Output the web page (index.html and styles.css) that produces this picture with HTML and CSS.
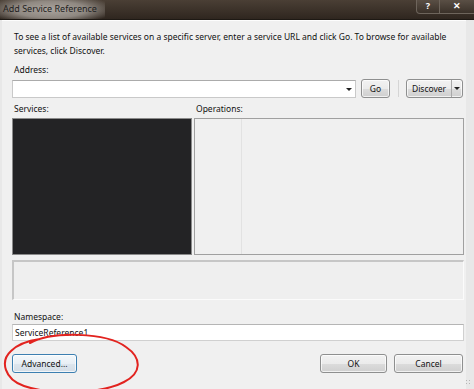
FILE: index.html
```html
<!DOCTYPE html>
<html lang="en">
<head>
  <meta charset="UTF-8" />
  <title>Add Service Reference</title>
  <link rel="stylesheet" href="styles.css">
</head>
<body>

<div class="window">
  <div class="titlebar">
    <span class="title">Add Service Reference</span>
    <div class="caption">
      <span class="cap cap-help">?</span>
      <span class="cap cap-close">✕</span>
    </div>
  </div>

  <div class="client">
    <p class="intro">To see a list of available services on a specific server, enter a service URL and click Go. To browse for available services, click Discover.</p>

    <div class="label">Address:</div>
    <div class="address-row">
      <div class="combo">
        <input type="text" class="combo-input" />
        <span class="combo-arrow"></span>
      </div>
      <button class="btn btn-go">Go</button>
      <span class="sep"></span>
      <div class="split">
        <span class="split-main">Discover</span>
        <span class="split-arrow"><span class="combo-arrow"></span></span>
      </div>
    </div>

    <div class="lists">
      <div class="col col-services">
        <div class="label">Services:</div>
        <div class="services-box"></div>
      </div>
      <div class="col col-ops">
        <div class="label">Operations:</div>
        <div class="ops-box">
          <div class="ops-tree"></div>
          <div class="ops-list"></div>
        </div>
      </div>
    </div>

    <div class="desc"></div>

    <div class="label label-ns">Namespace:</div>
    <input type="text" class="ns-input" value="ServiceReference1" />

    <div class="footer">
      <button class="btn btn-advanced">Advanced...</button>
      <span class="spacer"></span>
      <button class="btn btn-ok">OK</button>
      <button class="btn btn-cancel">Cancel</button>
    </div>
  </div>

  <span class="grip"></span>

  <!-- hand drawn mark round the Advanced button -->
  <svg class="mark" width="150" height="60" viewBox="0 330 150 60">
    <path d="M 30 343 C 52 331, 106 332, 126 347 C 142 358, 142 373, 124 382 C 102 394, 50 395, 24 386 C 4 379, 0 361, 11 351 C 17 345, 26 341, 40 339"
          fill="none" stroke="#e2231f" stroke-width="2" stroke-linecap="round" />
  </svg>
</div>

</body>
</html>
```

FILE: styles.css
```css
body {
  margin: 0;
  font-family: "Segoe UI", "Noto Sans", "Open Sans", sans-serif;
  font-size: 8.5px;
  color: #111;
  background: #e4e4e4;
  overflow: hidden;
}
.window {
  position: relative;
  width: 474px;
  height: 389px;
  overflow: hidden;
  background: #e8e8e8;
}
.titlebar {
  height: 19px;
  display: flex;
  align-items: flex-start;
  justify-content: space-between;
  background: linear-gradient(#4a3f35, #2f261f);
  border-bottom: 1px solid #1e1914;
}
.title {
  height: 19px;
  line-height: 17px;
  padding: 0 8px 0 3px;
  font-size: 9px;
  color: #1e1e1e;
  background: radial-gradient(ellipse 62% 80% at 48% 50%, #aaa49e 0%, #8f8881 55%, rgba(90,80,70,0) 100%);
}
.caption {
  display: flex;
}
.cap {
  height: 13px;
  line-height: 12px;
  text-align: center;
  color: #fff;
  font-weight: bold;
  font-size: 9px;
  border: 1px solid #6e655c;
  border-top: none;
  background: linear-gradient(#5a4f45, #3a3129);
}
.cap-help {
  width: 22px;
  border-radius: 0 0 0 4px;
}
.cap-close {
  width: 34px;
  border-left: none;
  border-right: none;
}
.client {
  margin: 0 8px 0 2px;
  padding: 9px 2px 0 10px;
  height: 369px;
  background: #f0f0f0;
  box-sizing: border-box;
  border-top: 1px solid #fdfdfd;
}
.intro {
  margin: 0;
  padding-left: 2px;
  line-height: 14px;
}
.label {
  line-height: 14px;
  padding-left: 2px;
}
.client > .label {
  margin-top: 5px;
}
.address-row {
  display: flex;
  align-items: center;
  height: 19px;
  margin-top: 2px;
}
.combo {
  position: relative;
  width: 344px;
  height: 18px;
  box-sizing: border-box;
  border: 1px solid #c9c9c9;
  border-top-color: #ababab;
  background: #fff;
}
.combo-input {
  width: 100%;
  height: 100%;
  border: none;
  padding: 0 16px 0 2px;
  box-sizing: border-box;
  background: transparent;
}
.combo-arrow {
  position: absolute;
  right: 3px;
  top: 7px;
  width: 0;
  height: 0;
  border-left: 3px solid transparent;
  border-right: 3px solid transparent;
  border-top: 3px solid #222;
}
.btn {
  font: inherit;
  color: #111;
  height: 19px;
  padding: 0;
  border: 1px solid #8e8f8f;
  border-radius: 3px;
  background: linear-gradient(#f2f2f2 0%, #ebebeb 50%, #dcdcdc 51%, #cfcfcf 100%);
  box-shadow: inset 0 0 0 1px rgba(255,255,255,0.7);
}
.btn-go {
  width: 29px;
  margin-left: 5px;
}
.sep {
  width: 1px;
  height: 17px;
  margin: 0 7px 0 8px;
  background: #d5d5d5;
}
.split {
  display: flex;
  height: 19px;
  width: 57px;
  box-sizing: border-box;
  border: 1px solid #8e8f8f;
  border-radius: 3px;
  background: linear-gradient(#f2f2f2 0%, #ebebeb 50%, #dcdcdc 51%, #cfcfcf 100%);
  box-shadow: inset 0 0 0 1px rgba(255,255,255,0.7);
}
.split-main {
  flex: 1;
  line-height: 17px;
  text-align: center;
  border-right: 1px solid #a8a8a8;
}
.split-arrow {
  position: relative;
  width: 10px;
}
.split-arrow .combo-arrow {
  right: 2px;
}
.lists {
  display: flex;
  gap: 2px;
  margin-top: 4px;
}
.col-services {
  width: 180px;
}
.col-ops {
  width: 270px;
}
.services-box {
  margin-top: 2px;
  height: 137px;
  box-sizing: border-box;
  border: 1px solid #8a8a8a;
  background: #232325;
}
.ops-box {
  display: flex;
  margin-top: 2px;
  height: 137px;
  box-sizing: border-box;
  border: 1px solid #a0a0a0;
  background: #f0f0f0;
}
.ops-tree {
  width: 46px;
  border-right: 1px solid #e2e2e2;
}
.ops-list {
  flex: 1;
}
.desc {
  margin-top: 5px;
  width: 452px;
  height: 40px;
  box-sizing: border-box;
  border: 1px solid #fbfbfb;
  border-top: 2px solid #c6c6c6;
  border-left: 2px solid #c6c6c6;
  background: #efefef;
}
.client > .label-ns {
  margin-top: 10px;
}
.ns-input {
  display: block;
  width: 452px;
  height: 17px;
  margin: 0;
  padding: 0 2px;
  box-sizing: border-box;
  font: inherit;
  color: #111;
  border: 1px solid #d0d0d0;
  border-top-color: #b5b5b5;
  background: #fff;
}
.footer {
  display: flex;
  margin-top: 13px;
}
.btn-advanced {
  width: 65px;
  border-color: #3c7fb1;
  background: linear-gradient(#f4f8fb 0%, #e8eff5 50%, #dde6ee 51%, #d4dde6 100%);
}
.spacer {
  flex: 1;
}
.btn-ok {
  width: 67px;
}
.btn-cancel {
  width: 69px;
  margin-left: 7px;
  margin-right: 1px;
}
.grip {
  position: absolute;
  right: 3px;
  bottom: 4px;
  width: 6px;
  height: 6px;
  background: radial-gradient(circle, #b5b5b5 0.8px, transparent 1px) 0 0 / 3px 3px;
}
.mark {
  position: absolute;
  left: 0;
  top: 330px;
}
```
